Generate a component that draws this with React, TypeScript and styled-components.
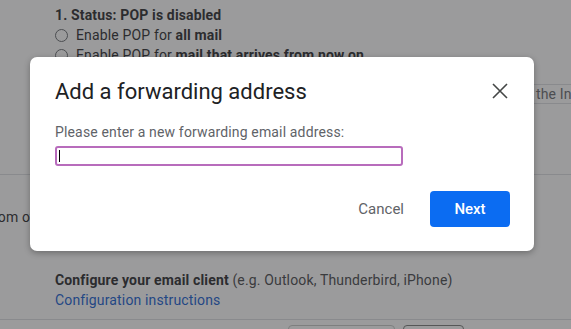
import React from 'react';
import styled, { createGlobalStyle } from 'styled-components';

const GlobalStyle = createGlobalStyle`
  html, body {
    margin: 0;
    padding: 0;
    background: #ffffff;
  }
  body {
    font-family: Roboto, "Noto Sans", "Liberation Sans", sans-serif;
    -webkit-font-smoothing: antialiased;
  }
`;

const Page = styled.div`
  position: relative;
  width: 571px;
  height: 329px;
  overflow: hidden;
  background: #ffffff;
  color: #202124;
  font-size: 14px;
  letter-spacing: 0.15px;
`;

const PopSection = styled.div`
  padding: 5px 0 0 55px;
  display: flex;
  flex-direction: column;
`;

const Line = styled.div`
  height: 20px;
  line-height: 20px;
  display: flex;
  align-items: center;
  white-space: nowrap;
`;

const Strong = styled.b`
  font-weight: 700;
`;

const Radio = styled.span`
  width: 11px;
  height: 11px;
  border: 1px solid #5f6368;
  border-radius: 50%;
  margin-right: 8px;
  flex: none;
`;

const SelectRow = styled.div`
  margin-top: 19px;
  padding-left: 531px;
`;

const SelectBox = styled.div`
  height: 18px;
  line-height: 18px;
  border-top: 1px solid #dadce0;
  border-bottom: 1px solid #dadce0;
  border-left: 1px solid #dadce0;
  padding-left: 4px;
  color: #5f6368;
  font-size: 14px;
  white-space: nowrap;
`;

const Divider = styled.div<{ $top: number }>`
  margin-top: ${(p) => p.$top}px;
  height: 1px;
  background: #dadce0;
`;

const LeftCut = styled.div`
  margin-top: 32px;
  margin-left: -12px;
  line-height: 20px;
  white-space: nowrap;
`;

const ClientSection = styled.div`
  margin-top: 43px;
  padding-left: 55px;
  display: flex;
  flex-direction: column;
`;

const Muted = styled.span`
  color: #3c4043;
`;

const HelpLink = styled.a`
  color: #0b57d0;
  text-decoration: none;
  line-height: 20px;
`;

const FooterButtons = styled.div`
  margin-top: 5px;
  padding-left: 288px;
  display: flex;
  gap: 8px;
`;

const GhostButton = styled.div<{ $w: number; $dark?: boolean }>`
  width: ${(p) => p.$w}px;
  height: 24px;
  border: 1px solid ${(p) => (p.$dark ? '#747775' : '#c4c7c5')};
  border-radius: 4px;
`;

const Overlay = styled.div`
  position: absolute;
  inset: 0;
  background: rgba(56, 56, 58, 0.5);
  padding: 57px 0 0 30px;
  letter-spacing: normal;
`;

const Dialog = styled.div`
  width: 504px;
  height: 194px;
  box-sizing: border-box;
  background: #ffffff;
  border-radius: 7px;
  box-shadow: 0 2px 6px rgba(0, 0, 0, 0.3);
  padding: 19px 24px 24px 25px;
  display: flex;
  flex-direction: column;
`;

const Header = styled.div`
  display: flex;
  justify-content: space-between;
  align-items: flex-start;
`;

const Title = styled.h2`
  margin: 0;
  font-size: 22px;
  line-height: 32px;
  font-weight: 400;
  color: #202124;
`;

const CloseButton = styled.button`
  border: 0;
  background: none;
  padding: 0;
  margin: 6px 1px 0 0;
  width: 18px;
  height: 18px;
  display: flex;
  align-items: center;
  justify-content: center;
  cursor: pointer;
`;

const Label = styled.label`
  margin-top: 14px;
  font-size: 14px;
  line-height: 20px;
  letter-spacing: 0.15px;
  color: #5f6368;
`;

const Caret = styled.span`
  width: 1px;
  height: 12px;
  background: #000;
`;

const InputBox = styled.div`
  margin-top: 4px;
  width: 348px;
  height: 20px;
  box-sizing: border-box;
  border: 2px solid #b86cbc;
  border-radius: 3px;
  padding: 0 2px;
  display: flex;
  align-items: center;
`;

const Actions = styled.div`
  margin-top: auto;
  display: flex;
  justify-content: flex-end;
  align-items: center;
  gap: 26px;
`;

const TextButton = styled.button`
  border: 0;
  background: none;
  padding: 0;
  font-family: inherit;
  font-size: 15px;
  font-weight: 400;
  color: #5f6368;
  cursor: pointer;
`;

const PrimaryButton = styled.button`
  width: 80px;
  height: 36px;
  border: 0;
  border-radius: 4px;
  background: #0b6cf2;
  color: #ffffff;
  font-family: inherit;
  font-size: 15px;
  font-weight: 500;
  cursor: pointer;
`;

export default function App() {
  return (
    <>
      <GlobalStyle />
      <Page>
        <PopSection>
          <Line>
            <Strong>1. Status: POP is disabled</Strong>
          </Line>
          <Line>
            <Radio />
            Enable POP for&nbsp;<Strong>all mail</Strong>
          </Line>
          <Line>
            <Radio />
            Enable POP for&nbsp;<Strong>mail that arrives from now on</Strong>
          </Line>
        </PopSection>
        <SelectRow>
          <SelectBox>the Inbox</SelectBox>
        </SelectRow>
        <Divider $top={70} />
        <LeftCut>from other accounts</LeftCut>
        <ClientSection>
          <Line>
            <Strong>Configure your email client</Strong>
            <Muted>&nbsp;(e.g. Outlook, Thunderbird, iPhone)</Muted>
          </Line>
          <HelpLink href="#">Configuration instructions</HelpLink>
        </ClientSection>
        <Divider $top={9} />
        <FooterButtons>
          <GhostButton $w={105} />
          <GhostButton $w={59} $dark />
        </FooterButtons>

        <Overlay>
          <Dialog role="dialog">
            <Header>
              <Title>Add a forwarding address</Title>
              <CloseButton aria-label="Close">
                <svg width="16" height="16" viewBox="0 0 16 16">
                  <path
                    d="M1 1 L15 15 M15 1 L1 15"
                    stroke="#444746"
                    strokeWidth="1.6"
                    fill="none"
                  />
                </svg>
              </CloseButton>
            </Header>
            <Label>Please enter a new forwarding email address:</Label>
            <InputBox>
              <Caret />
            </InputBox>
            <Actions>
              <TextButton>Cancel</TextButton>
              <PrimaryButton>Next</PrimaryButton>
            </Actions>
          </Dialog>
        </Overlay>
      </Page>
    </>
  );
}
